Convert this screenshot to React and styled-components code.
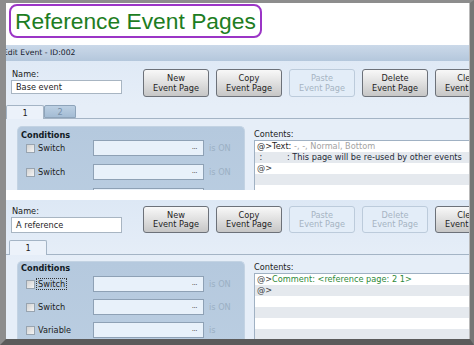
import React from "react";
import styled, { createGlobalStyle } from "styled-components";

const GlobalStyle = createGlobalStyle`
  html, body {
    margin: 0;
    padding: 0;
    background: #ffffff;
  }
  body {
    font-family: "DejaVu Sans", Verdana, sans-serif;
  }
`;

const windows = [
  {
    id: "base",
    title: "Edit Event - ID:002",
    name: "Base event",
    height: 145,
    pad: 8,
    inputHeight: 14,
    buttonHeight: 28,
    tabGap: 7,
    tabInset: 0,
    tabHeight: 14,
    paneGap: 7,
    condPad: 3,
    rowGap: 8,
    firstRowGap: 0,
    disabled: ["Paste"],
    tabs: ["1", "2"],
    conditions: [
      { label: "Switch", is: "is ON" },
      { label: "Switch", is: "is ON" },
      { label: "Variable", is: "is" },
    ],
    contents: [
      [
        { t: "@>Text: ", c: "#1e1e1e" },
        { t: "-, -, Normal, Bottom", c: "#a3a3a3" },
      ],
      [
        { t: " :", c: "#1e2a38", w: 30 },
        { t: ": This page will be re-used by other events", c: "#1e2a38" },
      ],
      [{ t: "@>", c: "#3a3a3a" }],
      [],
      [],
    ],
  },
  {
    id: "ref",
    name: "A reference",
    pad: 6,
    inputHeight: 16,
    buttonHeight: 27,
    tabGap: 6,
    tabInset: 3,
    tabHeight: 15,
    paneGap: 6,
    condPad: 1,
    rowGap: 7,
    firstRowGap: 3,
    disabled: ["Paste", "Delete"],
    tabs: ["1"],
    focusFirst: true,
    conditions: [
      { label: "Switch", is: "is ON" },
      { label: "Switch", is: "is ON" },
      { label: "Variable", is: "is" },
    ],
    contents: [
      [
        { t: "@>", c: "#3a3a3a" },
        { t: "Comment: <reference page: 2 1>", c: "#2f8a3a" },
      ],
      [{ t: "@>", c: "#3a3a3a" }],
      [],
      [],
      [],
      [],
    ],
  },
];

const buttonNames = ["New", "Copy", "Paste", "Delete", "Clear"];

const Frame = styled.div`
  width: 474px;
  height: 345px;
  box-sizing: border-box;
  border-style: solid;
  border-width: 3px 4px 6px 6px;
  border-color: #8d8d8d #767676 #5b5b5b #8d8d8d;
  background: #ffffff;
  overflow: hidden;
`;

const Sheet = styled.div`
  height: 100%;
  box-sizing: border-box;
  border-right: 1px solid #b9b9b9;
  display: flex;
  flex-direction: column;
  overflow: hidden;
`;

const TitleBox = styled.div`
  flex: none;
  align-self: flex-start;
  margin: 1px 0 0 3px;
  width: 253px;
  height: 34px;
  box-sizing: border-box;
  border: 2px solid #9b35c6;
  border-radius: 8px;
  padding: 1px 0 0 4px;
  display: flex;
  align-items: center;
  font-family: "Liberation Sans", Arial, sans-serif;
  font-size: 22.8px;
  color: #1d7d22;
  white-space: nowrap;
`;

const Window = styled.section`
  flex: ${(p) => (p.$height ? "none" : "1 0 auto")};
  height: ${(p) => (p.$height ? `${p.$height}px` : "auto")};
  margin-top: ${(p) => p.$gap}px;
  overflow: hidden;
  background: linear-gradient(#dde8f5, #e6eef8 60px);
`;

const TitleBar = styled.div`
  height: 16px;
  line-height: 16px;
  background: linear-gradient(#cbd9e9, #b4c7dc);
  font-size: 7.7px;
  color: #18222e;
  text-indent: -3px;
  white-space: nowrap;
  overflow: hidden;
`;

const Body = styled.div`
  width: 540px;
  padding-top: ${(p) => p.$pad}px;
`;

const TopRow = styled.div`
  display: flex;
  align-items: flex-start;
`;

const NameBlock = styled.div`
  margin-left: 5px;
  width: 111px;
  display: flex;
  flex-direction: column;
`;

const NameLabel = styled.div`
  height: 11px;
  line-height: 11px;
  padding-left: 1px;
  font-size: 8.2px;
  color: #1c1c1c;
`;

const NameInput = styled.div`
  height: ${(p) => p.$h}px;
  box-sizing: border-box;
  border: 1px solid #a8b5c2;
  background: #ffffff;
  padding: 0 4px;
  display: flex;
  align-items: center;
  font-size: 8.2px;
  color: #1c1c1c;
`;

const Buttons = styled.div`
  margin-left: 21px;
  display: flex;
  gap: 7px;
`;

const Button = styled.div`
  width: 66px;
  height: ${(p) => p.$h}px;
  box-sizing: border-box;
  border: 1px solid ${(p) => (p.$disabled ? "#bccbdb" : "#6c7179")};
  border-radius: 3px;
  background: ${(p) =>
    p.$disabled
      ? "#e3edf8"
      : "linear-gradient(#f8f8f8, #e2e2e2 45%, #c6c6c6)"};
  display: flex;
  flex-direction: column;
  justify-content: center;
  align-items: center;
  font-size: 8.2px;
  line-height: 9.5px;
  color: ${(p) => (p.$disabled ? "#a6b4c3" : "#1e1e1e")};
  padding-top: 1px;
`;

const TabStrip = styled.div`
  margin-top: ${(p) => p.$gap}px;
  height: ${(p) => p.$h}px;
  padding-left: ${(p) => p.$inset}px;
  display: flex;
  align-items: flex-end;
  border-bottom: 1px solid #a4b4c5;
`;

const Tab = styled.div`
  width: ${(p) => (p.$active ? 38 : 32)}px;
  height: ${(p) => (p.$active ? "100%" : "calc(100% - 1px)")};
  box-sizing: border-box;
  margin-bottom: ${(p) => (p.$active ? -1 : 0)}px;
  border: 1px solid ${(p) => (p.$active ? "#a4b4c5" : "#8ea4ba")};
  border-bottom: ${(p) => (p.$active ? "none" : "1px solid #8ea4ba")};
  border-radius: 2px 2px 0 0;
  background: ${(p) =>
    p.$active ? "#ecf2fa" : "linear-gradient(#bcd0e3, #a4bcd4)"};
  display: flex;
  align-items: center;
  justify-content: center;
  font-size: 8.2px;
  color: ${(p) => (p.$active ? "#1c1c1c" : "#7890a8")};
`;

const Pane = styled.div`
  margin-top: ${(p) => p.$gap}px;
  display: flex;
  align-items: flex-start;
`;

const ConditionsPanel = styled.div`
  margin-left: 11px;
  width: 228px;
  height: 120px;
  flex: none;
  box-sizing: border-box;
  padding: ${(p) => p.$pad}px 0 0 3px;
  border-radius: 5px 5px 0 0;
  border: 1px solid #c3d3e3;
  border-bottom: none;
  background: linear-gradient(#b5c9de, #bccfe2);
`;

const ConditionsTitle = styled.div`
  height: 10px;
  line-height: 10px;
  font-size: 8.2px;
  font-weight: bold;
  color: #111a24;
`;

const CondRow = styled.div`
  margin-top: ${(p) => p.$gap}px;
  height: 16px;
  display: flex;
  align-items: center;
`;

const CheckBox = styled.span`
  margin-left: 5px;
  width: 9px;
  height: 9px;
  flex: none;
  box-sizing: border-box;
  border: 1px solid #98a4b0;
  background: linear-gradient(135deg, #d2d2d2, #f4f4f4);
`;

const CondLabel = styled.span`
  margin-left: 2px;
  width: 56px;
  flex: none;
  display: flex;
  font-size: 8.2px;
  color: #1c1c1c;

  span {
    padding: 0 1px;
    line-height: 10px;
    outline: ${(p) => (p.$focus ? "1px dotted #333" : "none")};
  }
`;

const CondField = styled.span`
  width: 111px;
  height: 16px;
  flex: none;
  box-sizing: border-box;
  border: 1px solid #8ea1b5;
  background: #e8f1fa;
  display: flex;
  align-items: center;
  justify-content: flex-end;
  padding: 0 6px 3px 0;
  font-size: 7px;
  color: #3a3a3a;
  letter-spacing: -0.5px;
`;

const IsText = styled.span`
  margin-left: 5px;
  font-size: 8.2px;
  color: #9bb0c4;
`;

const ContentsBlock = styled.div`
  margin-left: 9px;
  flex: 1;
  padding-top: ${(p) => p.$pad}px;
`;

const ContentsLabel = styled.div`
  height: 10px;
  line-height: 10px;
  font-size: 8.2px;
  color: #1c1c1c;
`;

const List = styled.div`
  margin-top: 1px;
  height: 120px;
  border-top: 1px solid #a0b1c3;
  border-left: 1px solid #a0b1c3;
  background: #ffffff;
`;

const ListRow = styled.div`
  height: 11px;
  line-height: 11px;
  padding-left: 2px;
  font-size: 8.2px;
  white-space: pre;
  background: ${(p) => (p.$odd ? "#e5e9ee" : "#ffffff")};
`;

const Piece = styled.span`
  display: ${(p) => (p.$w ? "inline-block" : "inline")};
  width: ${(p) => (p.$w ? `${p.$w}px` : "auto")};
  color: ${(p) => p.$c};
`;

const EventWindow = ({ w, gap }) => (
  <Window $height={w.height} $gap={gap}>
    {w.title && <TitleBar>{w.title}</TitleBar>}
    <Body $pad={w.pad}>
      <TopRow>
        <NameBlock>
          <NameLabel>Name:</NameLabel>
          <NameInput $h={w.inputHeight}>{w.name}</NameInput>
        </NameBlock>
        <Buttons>
          {buttonNames.map((b) => (
            <Button key={b} $h={w.buttonHeight} $disabled={w.disabled.includes(b)}>
              <span>{b}</span>
              <span>Event Page</span>
            </Button>
          ))}
        </Buttons>
      </TopRow>
      <TabStrip $gap={w.tabGap} $h={w.tabHeight} $inset={w.tabInset}>
        {w.tabs.map((t, i) => (
          <Tab key={t} $active={i === 0}>
            {t}
          </Tab>
        ))}
      </TabStrip>
      <Pane $gap={w.paneGap}>
        <ConditionsPanel $pad={w.condPad}>
          <ConditionsTitle>Conditions</ConditionsTitle>
          {w.conditions.map((c, i) => (
            <CondRow key={i} $gap={i === 0 ? w.firstRowGap : w.rowGap}>
              <CheckBox />
              <CondLabel $focus={w.focusFirst && i === 0}>
                <span>{c.label}</span>
              </CondLabel>
              <CondField>...</CondField>
              <IsText>{c.is}</IsText>
            </CondRow>
          ))}
        </ConditionsPanel>
        <ContentsBlock $pad={w.condPad}>
          <ContentsLabel>Contents:</ContentsLabel>
          <List>
            {w.contents.map((row, i) => (
              <ListRow key={i} $odd={i % 2 === 1}>
                {row.map((p, j) => (
                  <Piece key={j} $c={p.c} $w={p.w}>
                    {p.t}
                  </Piece>
                ))}
              </ListRow>
            ))}
          </List>
        </ContentsBlock>
      </Pane>
    </Body>
  </Window>
);

export default function App() {
  return (
    <>
      <GlobalStyle />
      <Frame>
        <Sheet>
          <TitleBox>Reference Event Pages</TitleBox>
          <EventWindow w={windows[0]} gap={7} />
          <EventWindow w={windows[1]} gap={10} />
        </Sheet>
      </Frame>
    </>
  );
}
